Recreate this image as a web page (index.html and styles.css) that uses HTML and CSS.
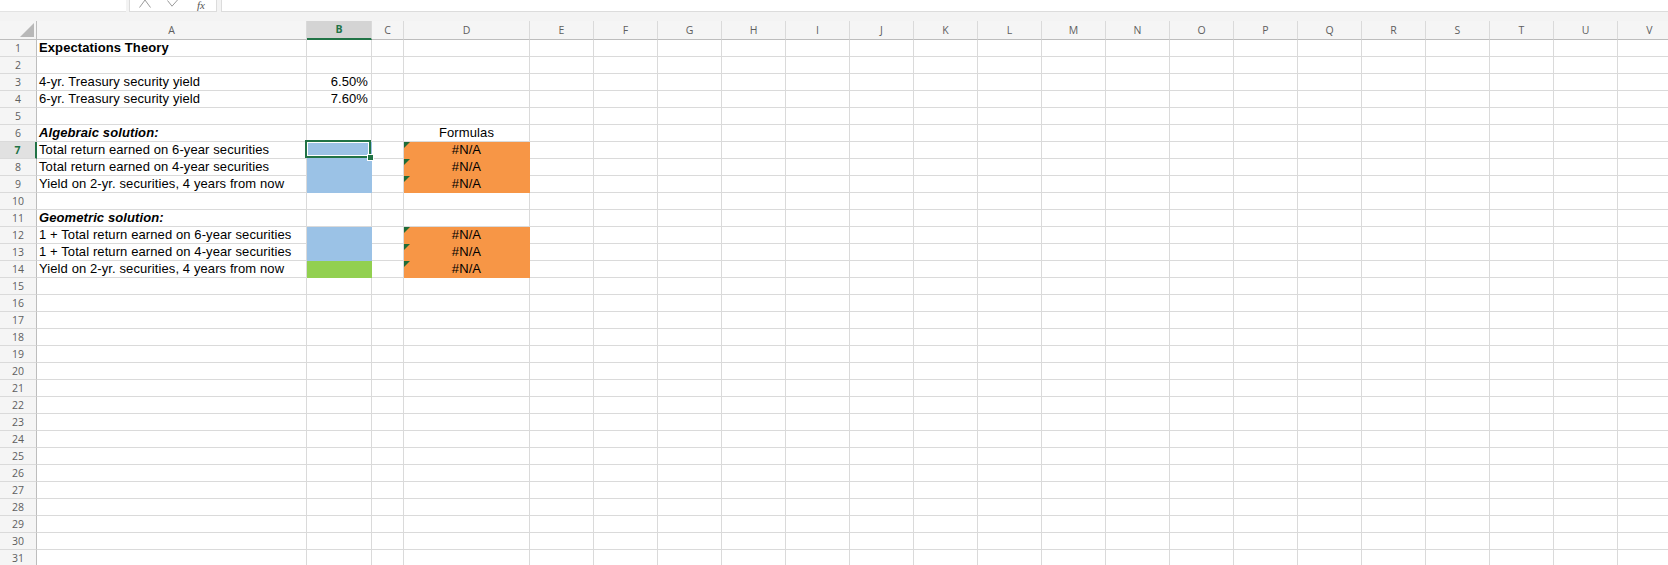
FILE: index.html
```html
<!DOCTYPE html>
<html lang="en">
<head>
<meta charset="utf-8">
<title>Expectations Theory</title>
<link rel="stylesheet" href="styles.css">
</head>
<body>
<div class="topbar">
  <div class="namebox"></div>
  <div class="fxbox">
    <svg class="ic-x" width="12" height="8" viewBox="0 0 12 8"><path d="M6 0 L0.5 7.5 M6 0 L11.5 7.5" fill="none" stroke="#9b9b9b" stroke-width="1"/></svg>
    <svg class="ic-v" width="11" height="7" viewBox="0 0 11 7"><path d="M0.5 0.5 L5 6.2 L10.5 0" fill="none" stroke="#9b9b9b" stroke-width="1"/></svg>
    <span class="fx">fx</span>
  </div>
  <div class="formula"></div>
</div>

<div class="sheet">
  <div class="row hdr">
    <div class="corner"></div><div>A</div><div class="hsel">B</div><div>C</div><div>D</div><div>E</div><div>F</div><div>G</div><div>H</div><div>I</div><div>J</div><div>K</div><div>L</div><div>M</div><div>N</div><div>O</div><div>P</div><div>Q</div><div>R</div><div>S</div><div>T</div><div>U</div><div>V</div>
  </div>
  <div class="row"><div class="rh">1</div><div class="b">Expectations Theory</div><div></div><div></div><div></div><div></div><div></div><div></div><div></div><div></div><div></div><div></div><div></div><div></div><div></div><div></div><div></div><div></div><div></div><div></div><div></div><div></div><div></div></div>
  <div class="row"><div class="rh">2</div><div></div><div></div><div></div><div></div><div></div><div></div><div></div><div></div><div></div><div></div><div></div><div></div><div></div><div></div><div></div><div></div><div></div><div></div><div></div><div></div><div></div><div></div></div>
  <div class="row"><div class="rh">3</div><div>4-yr. Treasury security yield</div><div class="num">6.50%</div><div></div><div></div><div></div><div></div><div></div><div></div><div></div><div></div><div></div><div></div><div></div><div></div><div></div><div></div><div></div><div></div><div></div><div></div><div></div><div></div></div>
  <div class="row"><div class="rh">4</div><div>6-yr. Treasury security yield</div><div class="num">7.60%</div><div></div><div></div><div></div><div></div><div></div><div></div><div></div><div></div><div></div><div></div><div></div><div></div><div></div><div></div><div></div><div></div><div></div><div></div><div></div><div></div></div>
  <div class="row"><div class="rh">5</div><div></div><div></div><div></div><div></div><div></div><div></div><div></div><div></div><div></div><div></div><div></div><div></div><div></div><div></div><div></div><div></div><div></div><div></div><div></div><div></div><div></div><div></div></div>
  <div class="row"><div class="rh">6</div><div class="bi">Algebraic solution:</div><div></div><div></div><div class="ctr">Formulas</div><div></div><div></div><div></div><div></div><div></div><div></div><div></div><div></div><div></div><div></div><div></div><div></div><div></div><div></div><div></div><div></div><div></div><div></div></div>
  <div class="row"><div class="rh rsel">7</div><div>Total return earned on 6-year securities</div><div class="blue sel"><span class="selbox"></span><span class="handle"></span></div><div></div><div class="orange err ctr">#N/A</div><div></div><div></div><div></div><div></div><div></div><div></div><div></div><div></div><div></div><div></div><div></div><div></div><div></div><div></div><div></div><div></div><div></div><div></div></div>
  <div class="row"><div class="rh">8</div><div>Total return earned on 4-year securities</div><div class="blue"></div><div></div><div class="orange err ctr">#N/A</div><div></div><div></div><div></div><div></div><div></div><div></div><div></div><div></div><div></div><div></div><div></div><div></div><div></div><div></div><div></div><div></div><div></div><div></div></div>
  <div class="row"><div class="rh">9</div><div>Yield on 2-yr. securities, 4 years from now</div><div class="blue"></div><div></div><div class="orange err ctr">#N/A</div><div></div><div></div><div></div><div></div><div></div><div></div><div></div><div></div><div></div><div></div><div></div><div></div><div></div><div></div><div></div><div></div><div></div><div></div></div>
  <div class="row"><div class="rh">10</div><div></div><div></div><div></div><div></div><div></div><div></div><div></div><div></div><div></div><div></div><div></div><div></div><div></div><div></div><div></div><div></div><div></div><div></div><div></div><div></div><div></div><div></div></div>
  <div class="row"><div class="rh">11</div><div class="bi">Geometric solution:</div><div></div><div></div><div></div><div></div><div></div><div></div><div></div><div></div><div></div><div></div><div></div><div></div><div></div><div></div><div></div><div></div><div></div><div></div><div></div><div></div><div></div></div>
  <div class="row"><div class="rh">12</div><div>1 + Total return earned on 6-year securities</div><div class="blue"></div><div></div><div class="orange err ctr">#N/A</div><div></div><div></div><div></div><div></div><div></div><div></div><div></div><div></div><div></div><div></div><div></div><div></div><div></div><div></div><div></div><div></div><div></div><div></div></div>
  <div class="row"><div class="rh">13</div><div>1 + Total return earned on 4-year securities</div><div class="blue"></div><div></div><div class="orange err ctr">#N/A</div><div></div><div></div><div></div><div></div><div></div><div></div><div></div><div></div><div></div><div></div><div></div><div></div><div></div><div></div><div></div><div></div><div></div><div></div></div>
  <div class="row"><div class="rh">14</div><div>Yield on 2-yr. securities, 4 years from now</div><div class="green"></div><div></div><div class="orange err ctr">#N/A</div><div></div><div></div><div></div><div></div><div></div><div></div><div></div><div></div><div></div><div></div><div></div><div></div><div></div><div></div><div></div><div></div><div></div><div></div></div>
  <div class="row"><div class="rh">15</div><div></div><div></div><div></div><div></div><div></div><div></div><div></div><div></div><div></div><div></div><div></div><div></div><div></div><div></div><div></div><div></div><div></div><div></div><div></div><div></div><div></div><div></div></div>
  <div class="row"><div class="rh">16</div><div></div><div></div><div></div><div></div><div></div><div></div><div></div><div></div><div></div><div></div><div></div><div></div><div></div><div></div><div></div><div></div><div></div><div></div><div></div><div></div><div></div><div></div></div>
  <div class="row"><div class="rh">17</div><div></div><div></div><div></div><div></div><div></div><div></div><div></div><div></div><div></div><div></div><div></div><div></div><div></div><div></div><div></div><div></div><div></div><div></div><div></div><div></div><div></div><div></div></div>
  <div class="row"><div class="rh">18</div><div></div><div></div><div></div><div></div><div></div><div></div><div></div><div></div><div></div><div></div><div></div><div></div><div></div><div></div><div></div><div></div><div></div><div></div><div></div><div></div><div></div><div></div></div>
  <div class="row"><div class="rh">19</div><div></div><div></div><div></div><div></div><div></div><div></div><div></div><div></div><div></div><div></div><div></div><div></div><div></div><div></div><div></div><div></div><div></div><div></div><div></div><div></div><div></div><div></div></div>
  <div class="row"><div class="rh">20</div><div></div><div></div><div></div><div></div><div></div><div></div><div></div><div></div><div></div><div></div><div></div><div></div><div></div><div></div><div></div><div></div><div></div><div></div><div></div><div></div><div></div><div></div></div>
  <div class="row"><div class="rh">21</div><div></div><div></div><div></div><div></div><div></div><div></div><div></div><div></div><div></div><div></div><div></div><div></div><div></div><div></div><div></div><div></div><div></div><div></div><div></div><div></div><div></div><div></div></div>
  <div class="row"><div class="rh">22</div><div></div><div></div><div></div><div></div><div></div><div></div><div></div><div></div><div></div><div></div><div></div><div></div><div></div><div></div><div></div><div></div><div></div><div></div><div></div><div></div><div></div><div></div></div>
  <div class="row"><div class="rh">23</div><div></div><div></div><div></div><div></div><div></div><div></div><div></div><div></div><div></div><div></div><div></div><div></div><div></div><div></div><div></div><div></div><div></div><div></div><div></div><div></div><div></div><div></div></div>
  <div class="row"><div class="rh">24</div><div></div><div></div><div></div><div></div><div></div><div></div><div></div><div></div><div></div><div></div><div></div><div></div><div></div><div></div><div></div><div></div><div></div><div></div><div></div><div></div><div></div><div></div></div>
  <div class="row"><div class="rh">25</div><div></div><div></div><div></div><div></div><div></div><div></div><div></div><div></div><div></div><div></div><div></div><div></div><div></div><div></div><div></div><div></div><div></div><div></div><div></div><div></div><div></div><div></div></div>
  <div class="row"><div class="rh">26</div><div></div><div></div><div></div><div></div><div></div><div></div><div></div><div></div><div></div><div></div><div></div><div></div><div></div><div></div><div></div><div></div><div></div><div></div><div></div><div></div><div></div><div></div></div>
  <div class="row"><div class="rh">27</div><div></div><div></div><div></div><div></div><div></div><div></div><div></div><div></div><div></div><div></div><div></div><div></div><div></div><div></div><div></div><div></div><div></div><div></div><div></div><div></div><div></div><div></div></div>
  <div class="row"><div class="rh">28</div><div></div><div></div><div></div><div></div><div></div><div></div><div></div><div></div><div></div><div></div><div></div><div></div><div></div><div></div><div></div><div></div><div></div><div></div><div></div><div></div><div></div><div></div></div>
  <div class="row"><div class="rh">29</div><div></div><div></div><div></div><div></div><div></div><div></div><div></div><div></div><div></div><div></div><div></div><div></div><div></div><div></div><div></div><div></div><div></div><div></div><div></div><div></div><div></div><div></div></div>
  <div class="row"><div class="rh">30</div><div></div><div></div><div></div><div></div><div></div><div></div><div></div><div></div><div></div><div></div><div></div><div></div><div></div><div></div><div></div><div></div><div></div><div></div><div></div><div></div><div></div><div></div></div>
  <div class="row"><div class="rh">31</div><div></div><div></div><div></div><div></div><div></div><div></div><div></div><div></div><div></div><div></div><div></div><div></div><div></div><div></div><div></div><div></div><div></div><div></div><div></div><div></div><div></div><div></div></div>
</div>
</body>
</html>
```

FILE: styles.css
```css
* { box-sizing: border-box; }
html, body { margin: 0; padding: 0; background: #fff; }
body {
  width: 1668px;
  height: 565px;
  overflow: hidden;
  font-family: "Liberation Sans", Arial, sans-serif;
}

/* formula bar (cropped at the top) */
.topbar {
  height: 21px;
  background: #f3f3f3;
  display: flex;
  align-items: flex-start;
}
.namebox {
  width: 126px;
  height: 12px;
  background: #fff;
  border-bottom: 1px solid #e3e3e3;
}
.fxbox {
  margin-left: 3px;
  width: 88px;
  height: 12px;
  background: #fff;
  border: 1px solid #dcdcdc;
  border-top: 0;
  display: flex;
  align-items: flex-start;
  padding-left: 9px;
  overflow: hidden;
}
.ic-x { display: block; }
.ic-v { display: block; margin-left: 16px; }
.fx {
  margin-left: 19px;
  font-family: "Liberation Serif", "Times New Roman", serif;
  font-style: italic;
  font-size: 11px;
  line-height: 10px;
  color: #555;
}
.formula {
  margin-left: 4px;
  flex: 1;
  height: 12px;
  background: #fff;
  border-left: 1px solid #dcdcdc;
  border-bottom: 1px solid #dcdcdc;
}

/* sheet */
.row {
  display: grid;
  grid-template-columns: 37px 270px 65px 32px 126px repeat(18, 64px);
  height: 17px;
}
.row > div {
  border-right: 1px solid #dadada;
  border-bottom: 1px solid #dadada;
  font-size: 13px;
  letter-spacing: 0.1px;
  line-height: 16px;
  white-space: nowrap;
  overflow: hidden;
  padding: 0 2px;
  color: #000;
}
.row > .rh {
  background: #f5f5f5;
  border-right-color: #bdbdbd;
  text-align: center;
  font-family: "Open Sans", "Noto Sans", sans-serif;
  font-size: 10.5px;
  letter-spacing: 0;
  color: #5e5e5e;
  padding: 0;
}
.row > .rsel {
  background: #e1e1e1;
  color: #217346;
  font-weight: bold;
  border-right: 2px solid #217346;
}

.hdr { height: 19px; }
.hdr > div {
  background: #f5f5f5;
  border-bottom: 1px solid #bdbdbd;
  text-align: center;
  font-family: "Open Sans", "Noto Sans", sans-serif;
  font-size: 10.5px;
  letter-spacing: 0;
  line-height: 18px;
  color: #5e5e5e;
}
.hdr > .corner {
  position: relative;
  border-right-color: #bdbdbd;
}
.hdr > .corner::after {
  content: "";
  position: absolute;
  right: 2px;
  bottom: 2px;
  width: 0;
  height: 0;
  border-bottom: 14px solid #b8b8b8;
  border-left: 14px solid transparent;
}
.hdr > .hsel {
  background: #d4d4d4;
  color: #217346;
  font-weight: bold;
  border-bottom: 2px solid #217346;
  line-height: 17px;
}

.b { font-weight: bold; }
.bi { font-weight: bold; font-style: italic; }
.num { text-align: right; padding-right: 3px !important; }
.ctr { text-align: center; }

.row > .blue { background: #9bc2e6; border-color: #9bc2e6; }
.row > .green { background: #92d050; border-color: #92d050; }
.row > .orange { background: #f79646; border-color: #f79646; }

.err { position: relative; }
.err::before {
  content: "";
  position: absolute;
  left: 0;
  top: 0;
  width: 0;
  height: 0;
  border-top: 6px solid #1e6c38;
  border-right: 6px solid transparent;
}

.row > .sel { position: relative; overflow: visible; z-index: 2; }
.selbox {
  position: absolute;
  top: -2px;
  left: -2px;
  right: 0;
  bottom: 0;
  border: 2px solid #217346;
  box-shadow: inset 0 0 0 1px #fff;
}
.handle {
  position: absolute;
  right: -3px;
  bottom: -3px;
  width: 7px;
  height: 7px;
  background: #217346;
  border: 1px solid #fff;
}
```
